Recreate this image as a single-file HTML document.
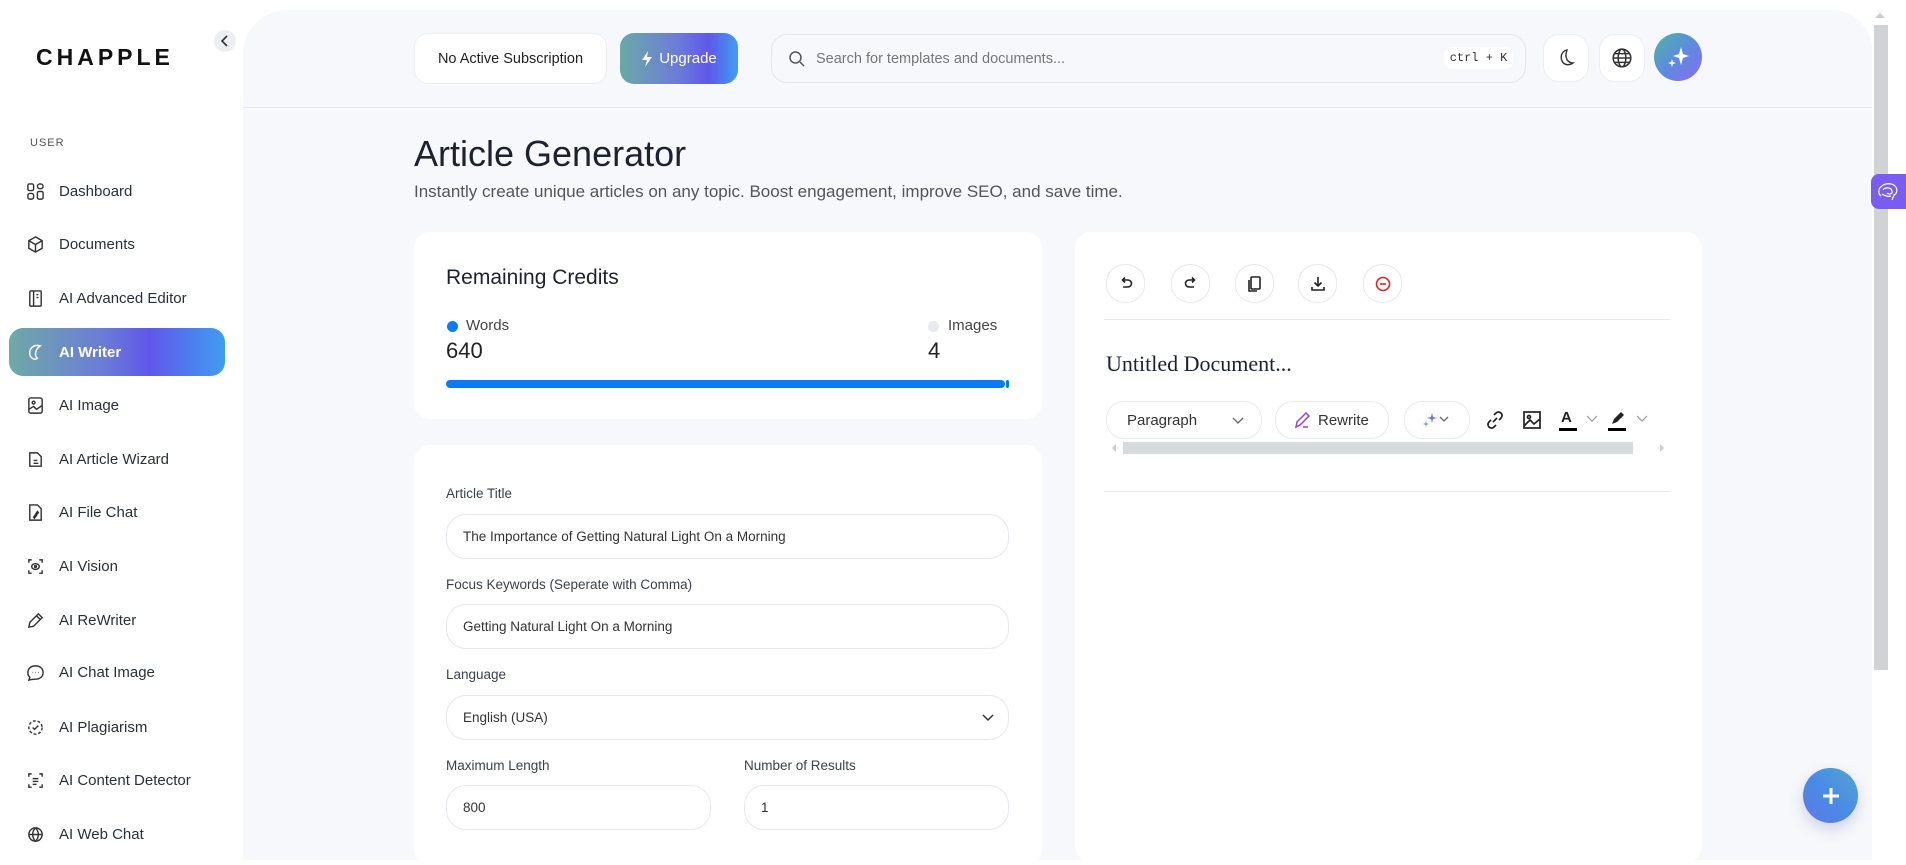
<!DOCTYPE html>
<html><head><meta charset="utf-8">
<style>
*{box-sizing:border-box;margin:0;padding:0}
body{width:1906px;height:849px;overflow:hidden;background:#fff;font-family:"Liberation Sans",sans-serif;color:#1f2330;position:relative}
.abs{position:absolute}
.logo{left:36px;top:44px;font-size:23px;font-weight:700;letter-spacing:4px;color:#111}
.collapse{left:214px;top:30px;width:22px;height:22px;border-radius:50%;background:#eceef2;display:flex;align-items:center;justify-content:center}
.user{left:30px;top:137px;font-size:11px;letter-spacing:1px;color:#555}
.nav{left:9px;width:216px;height:48px;display:flex;align-items:center;padding-left:17px;font-size:15px;color:#2a2f3a}
.nav svg{width:19px;height:19px;margin-right:14px;fill:none;stroke:#333;stroke-width:1.5}
.nav.act{background:linear-gradient(90deg,#6ea9a6 0%,#6b7ad8 45%,#6157ea 65%,#3f9df2 100%);color:#fff;border-radius:14px;font-weight:700}
.nav.act svg{stroke:#fff}
.main{left:243px;top:10px;width:1629px;height:850px;background:#f7f8fb;border-radius:44px 40px 0 0}
.hdrline{left:243px;top:107px;width:1629px;height:1px;background:#e6e8ed}
.btn{background:#fff;border:1px solid #eceef2;border-radius:14px;display:flex;align-items:center;justify-content:center}
.card{background:#fff;border-radius:16px}
.lbl{font-size:13.5px;color:#3a3f4a}
.inp{background:#fff;border:1px solid #e6e8ed;border-radius:20px;height:46px;display:flex;align-items:center;padding-left:16px;font-size:13.5px;color:#333}
.tb{width:39px;height:39px;border:1px solid #e6e8ed;border-radius:50%/45%;display:flex;align-items:center;justify-content:center;background:#fff}
.tb svg{width:18px;height:18px;fill:none;stroke:#222;stroke-width:1.6}
.fb{border:1px solid #e8eaee;border-radius:18px;height:38px;display:flex;align-items:center;font-size:15px;color:#333;background:#fff}
</style></head><body>
<div class="abs logo">CHAPPLE</div>
<div class="abs collapse"><svg width="10" height="12" viewBox="0 0 10 12"><path d="M7 1 L2 6 L7 11" stroke="#333" stroke-width="1.6" fill="none"/></svg></div>
<div class="abs user">USER</div>

<div class="abs nav" style="top:167px"><svg viewBox="0 0 20 20"><rect x="2" y="2" width="6" height="7" rx="1.5"/><rect x="12" y="2" width="6" height="5" rx="2.5"/><rect x="2" y="12" width="6" height="6" rx="2"/><rect x="12" y="10" width="6" height="8" rx="1.5"/></svg>Dashboard</div>
<div class="abs nav" style="top:220px"><svg viewBox="0 0 20 20"><path d="M10 2 L17 6 L17 14 L10 18 L3 14 L3 6 Z M3 6 L10 10 L17 6 M10 10 L10 18"/></svg>Documents</div>
<div class="abs nav" style="top:274px"><svg viewBox="0 0 20 20"><rect x="4" y="2" width="12" height="16" rx="1"/><path d="M8 2 V18 M11 6 h2 M11 9 h2"/></svg>AI Advanced Editor</div>
<div class="abs nav act" style="top:328px"><svg viewBox="0 0 20 20"><path d="M15 3 C8 1 3 6 4 12 C5 17 10 18 12 16 C9 14 9 7 15 3 Z"/></svg>AI Writer</div>
<div class="abs nav" style="top:381px"><svg viewBox="0 0 20 20"><rect x="3" y="2" width="14" height="16" rx="2"/><circle cx="8" cy="7" r="1.5"/><path d="M3 14 L8 11 L11 14 L17 10"/></svg>AI Image</div>
<div class="abs nav" style="top:435px"><svg viewBox="0 0 20 20"><path d="M4 3 H12 L16 7 V17 H4 Z M8 11 h4 M8 14 h5"/></svg>AI Article Wizard</div>
<div class="abs nav" style="top:488px"><svg viewBox="0 0 20 20"><path d="M4 2 H12 L16 6 V18 H4 Z M8 15 L12 9 L13 10 L9 16 Z"/></svg>AI File Chat</div>
<div class="abs nav" style="top:542px"><svg viewBox="0 0 20 20"><path d="M3 6 V3 H6 M14 3 H17 V6 M17 14 V17 H14 M6 17 H3 V14"/><ellipse cx="10" cy="10" rx="4" ry="3"/><circle cx="10" cy="10" r="1"/></svg>AI Vision</div>
<div class="abs nav" style="top:596px"><svg viewBox="0 0 20 20"><path d="M3 17 L4 12 L13 3 L17 7 L8 16 Z M11 5 L15 9"/></svg>AI ReWriter</div>
<div class="abs nav" style="top:648px"><svg viewBox="0 0 20 20"><path d="M10 3 C15 3 18 6 18 10 C18 14 15 17 10 17 C8 17 6 17 3 18 L4 15 C2 13 2 12 2 10 C2 6 5 3 10 3 Z M7 10 h.5 M10 10 h.5 M13 10 h.5"/></svg>AI Chat Image</div>
<div class="abs nav" style="top:703px"><svg viewBox="0 0 20 20" stroke-dasharray="3 2"><circle cx="10" cy="10" r="7"/><path d="M7 10 L9 12 L13 8" stroke-dasharray="none"/></svg>AI Plagiarism</div>
<div class="abs nav" style="top:756px"><svg viewBox="0 0 20 20"><path d="M3 6 V3 H6 M14 3 H17 V6 M17 14 V17 H14 M6 17 H3 V14 M7 8 h6 M7 11 h6 M7 14 h4"/></svg>AI Content Detector</div>
<div class="abs nav" style="top:810px"><svg viewBox="0 0 20 20"><circle cx="10" cy="10" r="7"/><path d="M3 10 h14 M10 3 C6 7 6 13 10 17 C14 13 14 7 10 3"/></svg>AI Web Chat</div>

<div class="abs main"></div>
<div class="abs hdrline"></div>

<div class="abs btn" style="left:414px;top:33px;width:193px;height:51px;font-size:14.5px;color:#222">No Active Subscription</div>
<div class="abs" style="left:620px;top:33px;width:118px;height:51px;border-radius:14px;background:linear-gradient(90deg,#6aa9a5,#6b7bd8 50%,#5f58ea 75%,#3f9df2);color:#fff;font-size:15px;display:flex;align-items:center;justify-content:center"><svg width="12" height="16" viewBox="0 0 12 16" style="margin-right:6px"><path d="M7 0 L1 9 H6 L4 16 L11 6 H6 Z" fill="#fff"/></svg>Upgrade</div>
<div class="abs" style="left:771px;top:34px;width:755px;height:49px;border:1px solid #e4e6eb;border-radius:16px;background:#f7f8fb;display:flex;align-items:center;padding-left:16px;font-size:14.5px;color:#777">
<svg width="18" height="18" viewBox="0 0 18 18" style="margin-right:10px"><circle cx="7.5" cy="7.5" r="5.5" stroke="#555" stroke-width="1.5" fill="none"/><path d="M12 12 L16 16" stroke="#555" stroke-width="1.5"/></svg>Search for templates and documents...</div>
<div class="abs" style="left:1444px;top:47px;width:69px;height:22px;border-radius:8px;background:#fff;font-family:'Liberation Mono',monospace;font-size:12px;color:#333;display:flex;align-items:center;justify-content:center">ctrl + K</div>
<div class="abs btn" style="left:1543px;top:34px;width:46px;height:48px;border-radius:16px"><svg width="20" height="20" viewBox="0 0 20 20"><path d="M11 2 C6 3 4 8 6 13 C8 17 13 18 17 15 C12 15 8 10 11 2 Z" fill="none" stroke="#333" stroke-width="1.4"/></svg></div>
<div class="abs btn" style="left:1599px;top:34px;width:46px;height:48px;border-radius:16px"><svg width="22" height="22" viewBox="0 0 20 20" fill="none" stroke="#333" stroke-width="1.4"><circle cx="10" cy="10" r="8"/><ellipse cx="10" cy="10" rx="3.5" ry="8"/><path d="M2 10 h16 M3 6 h14 M3 14 h14"/></svg></div>
<div class="abs" style="left:1654px;top:33px;width:48px;height:48px;border-radius:50%;background:linear-gradient(135deg,#4fb5a0,#5c8be0 50%,#8a6cf0);display:flex;align-items:center;justify-content:center"><svg width="26" height="26" viewBox="0 0 26 26"><path d="M16 3 L18 10 L24 12 L18 14 L16 21 L14 14 L8 12 L14 10 Z" fill="#fff"/><path d="M7 15 L8 18 L11 19 L8 20 L7 23 L6 20 L3 19 L6 18 Z" fill="#fff"/></svg></div>

<div class="abs" style="left:414px;top:133px;font-size:36px;font-weight:500;color:#1d2230">Article Generator</div>
<div class="abs" style="left:414px;top:182px;font-size:17px;color:#555">Instantly create unique articles on any topic. Boost engagement, improve SEO, and save time.</div>

<div class="abs card" style="left:414px;top:232px;width:628px;height:187px"></div>
<div class="abs" style="left:446px;top:266px;font-size:21px;color:#1d2230">Remaining Credits</div>
<div class="abs" style="left:447px;top:321px;width:11px;height:11px;border-radius:50%;background:#0a7cf3"></div>
<div class="abs" style="left:466px;top:317px;font-size:15px;color:#444">Words</div>
<div class="abs" style="left:446px;top:338px;font-size:22px;color:#222">640</div>
<div class="abs" style="left:928px;top:321px;width:11px;height:11px;border-radius:50%;background:#e9eaee"></div>
<div class="abs" style="left:948px;top:317px;font-size:15px;color:#444">Images</div>
<div class="abs" style="left:928px;top:338px;font-size:22px;color:#222">4</div>
<div class="abs" style="left:446px;top:380px;width:559px;height:8px;border-radius:4px;background:#0a7cf3"></div>
<div class="abs" style="left:1006px;top:380px;width:3px;height:8px;border-radius:2px;background:#0a7cf3"></div>

<div class="abs card" style="left:414px;top:445px;width:628px;height:420px"></div>
<div class="abs lbl" style="left:446px;top:486px">Article Title</div>
<div class="abs inp" style="left:446px;top:514px;width:563px;height:45px">The Importance of Getting Natural Light On a Morning</div>
<div class="abs lbl" style="left:446px;top:577px">Focus Keywords (Seperate with Comma)</div>
<div class="abs inp" style="left:446px;top:604px;width:563px;height:45px">Getting Natural Light On a Morning</div>
<div class="abs lbl" style="left:446px;top:667px">Language</div>
<div class="abs inp" style="left:446px;top:695px;width:563px;height:45px">English (USA)<svg class="abs" style="right:14px;top:18px" width="12" height="8" viewBox="0 0 12 8"><path d="M1 1 L6 6 L11 1" stroke="#333" stroke-width="1.5" fill="none"/></svg></div>
<div class="abs lbl" style="left:446px;top:758px">Maximum Length</div>
<div class="abs lbl" style="left:744px;top:758px">Number of Results</div>
<div class="abs inp" style="left:446px;top:785px;width:265px;height:45px">800</div>
<div class="abs inp" style="left:744px;top:785px;width:265px;height:45px">1</div>

<div class="abs card" style="left:1075px;top:232px;width:627px;height:630px"></div>
<div class="abs tb" style="left:1106px;top:264px"><svg viewBox="0 0 18 18"><path d="M6 5 H11 A3.5 3.5 0 0 1 11 12 H6 M8 2.5 L5.5 5 L8 7.5"/></svg></div>
<div class="abs tb" style="left:1171px;top:264px"><svg viewBox="0 0 18 18"><path d="M12 5 H7 A3.5 3.5 0 0 0 7 12 H12 M10 2.5 L12.5 5 L10 7.5"/></svg></div>
<div class="abs tb" style="left:1235px;top:264px"><svg viewBox="0 0 18 18"><rect x="5" y="2" width="9" height="12" rx="1"/><path d="M3 5 V16 H11"/></svg></div>
<div class="abs tb" style="left:1298px;top:264px"><svg viewBox="0 0 18 18"><path d="M9 2 V11 M5.5 7.5 L9 11 L12.5 7.5 M3 12 V15 H15 V12"/></svg></div>
<div class="abs tb" style="left:1363px;top:264px"><svg viewBox="0 0 18 18" style="stroke:#e02424"><circle cx="9" cy="9" r="6.5"/><path d="M6 9 H12"/></svg></div>
<div class="abs" style="left:1104px;top:319px;width:566px;height:1px;background:#e6e8ed"></div>
<div class="abs" style="left:1106px;top:351px;font-family:'Liberation Serif',serif;font-size:22px;color:#1d2230">Untitled Document...</div>

<div class="abs fb" style="left:1106px;top:401px;width:156px;padding-left:20px">Paragraph<svg class="abs" style="left:125px;top:15px" width="12" height="8" viewBox="0 0 12 8"><path d="M1 1 L6 6 L11 1" stroke="#666" stroke-width="1.3" fill="none"/></svg></div>
<div class="abs fb" style="left:1275px;top:401px;width:114px;padding-left:18px"><svg width="18" height="18" viewBox="0 0 18 18" style="margin-right:6px"><path d="M2 16 L3 11 L12 2 L15 5 L6 14 Z M9 16 H14" stroke="#9b3fd6" stroke-width="1.5" fill="none"/></svg>Rewrite</div>
<div class="abs fb" style="left:1404px;top:401px;width:66px;padding-left:18px"><svg width="32" height="16" viewBox="0 0 32 16"><path d="M9 1 L10 5 L14 6 L10 7 L9 11 L8 7 L4 6 L8 5 Z" fill="#6a6cf0"/><path d="M3 9 L3.7 11.3 L6 12 L3.7 12.7 L3 15 L2.3 12.7 L0 12 L2.3 11.3 Z" fill="#6a9cf0"/><path d="M17 5 L21 9 L25 5" stroke="#666" stroke-width="1.3" fill="none"/></svg></div>
<svg class="abs" style="left:1485px;top:410px" width="20" height="20" viewBox="0 0 20 20" fill="none" stroke="#222" stroke-width="1.7"><path d="M8 12 L12 8 M9 5 L11 3 A3 3 0 0 1 16 8 L14 10 M11 15 L9 17 A3 3 0 0 1 4 12 L6 10"/></svg>
<svg class="abs" style="left:1522px;top:410px" width="20" height="20" viewBox="0 0 20 20" fill="none" stroke="#222" stroke-width="1.7"><rect x="2" y="2" width="16" height="16"/><circle cx="7" cy="7" r="1.5"/><path d="M2 16 L8 10 L12 14 L18 9"/></svg>
<div class="abs" style="left:1561px;top:409px;font-size:15px;font-weight:700;color:#222">A</div>
<div class="abs" style="left:1559px;top:428px;width:18px;height:3px;background:#000"></div>
<svg class="abs" style="left:1586px;top:415px" width="12" height="8" viewBox="0 0 12 8"><path d="M1 1 L6 6 L11 1" stroke="#999" stroke-width="1.2" fill="none"/></svg>
<svg class="abs" style="left:1609px;top:410px" width="18" height="16" viewBox="0 0 18 16"><path d="M3 14 L5 9 L12 2 L15 5 L8 12 Z" fill="#222"/></svg>
<div class="abs" style="left:1608px;top:428px;width:18px;height:3px;background:#000"></div>
<svg class="abs" style="left:1636px;top:415px" width="12" height="8" viewBox="0 0 12 8"><path d="M1 1 L6 6 L11 1" stroke="#999" stroke-width="1.2" fill="none"/></svg>
<div class="abs" style="left:1123px;top:442px;width:510px;height:12px;background:#d9dade"></div>
<div class="abs" style="left:1112px;top:444px;width:0;height:0;border:4px solid transparent;border-right-color:#ccc;border-left:0"></div>
<div class="abs" style="left:1660px;top:444px;width:0;height:0;border:4px solid transparent;border-left-color:#ccc;border-right:0"></div>
<div class="abs" style="left:1104px;top:491px;width:566px;height:1px;background:#e6e8ed"></div>

<div class="abs" style="left:1874px;top:25px;width:14px;height:645px;background:#d0d2d6"></div>
<div class="abs" style="left:1875px;top:13px;width:0;height:0;border:5px solid transparent;border-bottom-color:#ccc;border-top:0"></div>
<div class="abs" style="left:1871px;top:174px;width:40px;height:35px;border-radius:8px 0 0 8px;background:#7a5cf0;display:flex;align-items:center;padding-left:6px"><svg width="22" height="20" viewBox="0 0 22 20" fill="none" stroke="#fff" stroke-width="1.2"><path d="M4 14 C1 12 1 6 5 4 C8 1 15 1 18 4 C21 7 20 12 17 13 L15 18 M6 8 C8 5 14 5 15 9 C16 12 12 13 10 11 M5 12 C8 14 12 15 14 14"/></svg></div>
<div class="abs" style="left:1803px;top:768px;width:55px;height:55px;border-radius:50%;background:linear-gradient(225deg,#52a6cc,#4a8be6 50%,#5f78e6);box-shadow:0 6px 14px rgba(80,100,180,.25);display:flex;align-items:center;justify-content:center"><svg width="20" height="20" viewBox="0 0 20 20"><path d="M10 2 V18 M2 10 H18" stroke="#fff" stroke-width="3"/></svg></div>
</body></html>
